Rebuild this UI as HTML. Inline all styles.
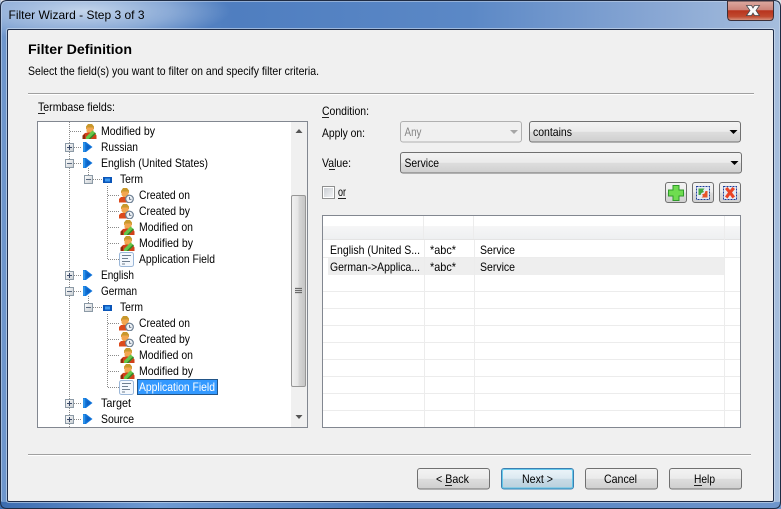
<!DOCTYPE html>
<html><head><meta charset="utf-8"><title>Filter Wizard - Step 3 of 3</title>
<style>
html,body{margin:0;padding:0;background:#f0f0f0;width:781px;height:509px;overflow:hidden}
svg{display:block}
text{font-family:"Liberation Sans",sans-serif;font-size:12px;fill:#000;}
.d{stroke:#8a8a8a;stroke-width:1;stroke-dasharray:1 1;fill:none;shape-rendering:crispEdges}
.u{stroke:#222;stroke-width:1;shape-rendering:crispEdges}
.g{stroke:#ececec;stroke-width:1;shape-rendering:crispEdges}
</style></head><body>
<svg width="781" height="509" viewBox="0 0 781 509" xmlns="http://www.w3.org/2000/svg">
<defs>
<linearGradient id="fr" x1="0" x2="1" y1="0" y2="0"><stop offset="0" stop-color="#6f96cc"/><stop offset=".3" stop-color="#4f7ec0"/><stop offset=".6" stop-color="#5b88c6"/><stop offset=".85" stop-color="#8aa8d4"/><stop offset="1" stop-color="#a6bedd"/></linearGradient>
<linearGradient id="frb" x1="0" x2="1" y1="0" y2="0"><stop offset="0" stop-color="#3c6cb0"/><stop offset=".2" stop-color="#6f9ad2"/><stop offset=".5" stop-color="#4d7cbe"/><stop offset="1" stop-color="#6f96cc"/></linearGradient>
<radialGradient id="glow" cx=".5" cy=".5" r=".5"><stop offset="0" stop-color="#e4edf7" stop-opacity=".75"/><stop offset=".6" stop-color="#d4e1f2" stop-opacity=".4"/><stop offset="1" stop-color="#d4e1f2" stop-opacity="0"/></radialGradient>
<linearGradient id="cl" x1="0" x2="0" y1="0" y2="1"><stop offset="0" stop-color="#dcaaa2"/><stop offset=".45" stop-color="#cc857a"/><stop offset=".5" stop-color="#b8341e"/><stop offset=".8" stop-color="#c04a30"/><stop offset="1" stop-color="#d89a88"/></linearGradient>
<linearGradient id="b" x1="0" x2="0" y1="0" y2="1"><stop offset="0" stop-color="#f3f3f3"/><stop offset=".48" stop-color="#ebebeb"/><stop offset=".52" stop-color="#dddddd"/><stop offset="1" stop-color="#cfcfcf"/></linearGradient>
<linearGradient id="nx" x1="0" x2="0" y1="0" y2="1"><stop offset="0" stop-color="#ecf5fa"/><stop offset=".48" stop-color="#dce9f1"/><stop offset=".52" stop-color="#c8dbe6"/><stop offset="1" stop-color="#b9cfdc"/></linearGradient>
<linearGradient id="th" x1="0" x2="1" y1="0" y2="0"><stop offset="0" stop-color="#f1f1f1"/><stop offset=".45" stop-color="#e6e6e6"/><stop offset=".55" stop-color="#d6d6d6"/><stop offset="1" stop-color="#c4c4c4"/></linearGradient>
<linearGradient id="hd" x1="0" x2="0" y1="0" y2="1"><stop offset="0" stop-color="#f6f6f7"/><stop offset="1" stop-color="#eef0f1"/></linearGradient>
<linearGradient id="ex" x1="0" x2="1" y1="0" y2="1"><stop offset="0" stop-color="#fff"/><stop offset="1" stop-color="#c8cdd2"/></linearGradient>
<linearGradient id="cb" x1="0" x2="1" y1="0" y2="1"><stop offset="0" stop-color="#cbcfd4"/><stop offset="1" stop-color="#f2f3f5"/></linearGradient>

<symbol id="plus" viewBox="0 0 9 9" width="9" height="9"><rect x=".5" y=".5" width="8" height="8" fill="url(#ex)" stroke="#8c9aa6"/><path d="M2 4.5H7M4.5 2V7" stroke="#3a4a68" stroke-width="1" shape-rendering="crispEdges"/></symbol>
<symbol id="minus" viewBox="0 0 9 9" width="9" height="9"><rect x=".5" y=".5" width="8" height="8" fill="url(#ex)" stroke="#8c9aa6"/><path d="M2 4.500H7" stroke="#5a6a80" stroke-width="1" shape-rendering="crispEdges"/></symbol>
<symbol id="arrow" viewBox="0 0 10 10" width="10" height="10"><path d="M0 0H3L9.500 5L3 10H0Z" fill="#1176dc"/><path d="M1 .5V9.500" stroke="#4fb0f2" stroke-width="1"/><path d="M3.500 2L8 5L3.500 8Z" fill="#0d62c4"/></symbol>
<symbol id="pm" viewBox="0 0 15 15" width="15" height="15">
<path d="M4 2.500L6 0H10L12 2.500V5H4Z" fill="#c8982c"/>
<path d="M4.500 3.500H11.500V7.500L10 9H6L4.500 7.500Z" fill="#f2a650"/>
<path d="M.5 15V11.500L3 9L6 8.500H10L13 9L14.500 11.500V15Z" fill="#d2401a"/>
<path d="M.5 15V12L3 10V15Z" fill="#8c2a0c"/>
<path d="M4 13L10.500 6.500L13 8.500L6.500 15H4Z" fill="#64c84a"/>
<path d="M6.500 15L13 8.500L14 9.500L8.500 15Z" fill="#2e8c28"/>
</symbol>
<symbol id="pc" viewBox="0 0 15 15" width="15" height="15">
<path d="M2 3L4 0H8L10 2.500V5H2Z" fill="#c8982c"/>
<path d="M2.500 3.500H9.500V7L8 9H4L2.500 7Z" fill="#f2a650"/>
<path d="M0 14.500V11L2 9H9L10 11V14.500Z" fill="#dc4a1c"/>
<circle cx="10.500" cy="11" r="3.800" fill="#eef2f6" stroke="#6d7f92" stroke-width="1.200"/>
<path d="M10.500 9V11.300L12.400 11.300" stroke="#5c6c80" stroke-width=".9" fill="none"/>
</symbol>
<symbol id="af" viewBox="0 0 15 15" width="15" height="15">
<rect x=".5" y=".5" width="14" height="14" rx="2" fill="#f4f8fd" stroke="#9bb7d8"/>
<path d="M3 3.500H12M3 6.500H9M3 9.500H11M3 12H6" stroke="#6f7f90" stroke-width="1" shape-rendering="crispEdges"/>
</symbol>
<symbol id="term" viewBox="0 0 9 6" width="9" height="6"><rect x="0" y="0" width="9" height="6" fill="#0a55b8"/><rect x="2" y="1.500" width="5" height="3" fill="#3f9af0"/></symbol>
</defs>

<!-- window frame -->
<rect x="0" y="0" width="781" height="509" fill="url(#fr)"/>
<rect x="0" y="502" width="781" height="7" fill="url(#frb)"/>
<rect x="-60" y="-20" width="290" height="62" fill="url(#glow)"/>
<path d="M0 0H6Q1 1 .5 7V0ZM781 0H774Q780 1 781 7V0Z" fill="#dfe3e8"/>
<path d="M.5 502V7Q.5 .5 7 .5H774Q780.500 .5 780.500 7V502Q780.500 508.500 774 508.500H7Q.5 508.500 .5 502Z" fill="none" stroke="#1f2c44"/>
<path d="M1.500 501V8Q1.500 1.500 8 1.500H773Q779.500 1.500 779.500 8V501" fill="none" stroke="#cfdcec" stroke-opacity=".5"/>
<rect x="7.500" y="29.500" width="766" height="472" rx="1.500" fill="#f0f0f0" stroke="#1e2c48"/>
<rect x="6.500" y="28.500" width="768" height="474" rx="2" fill="none" stroke="#dbe6f3" stroke-opacity=".55"/>
<text x="8.500" y="19" textLength="136" lengthAdjust="spacingAndGlyphs">Filter Wizard - Step 3 of 3</text>

<!-- close -->
<path d="M727.500 1V16Q727.500 20.500 731 20.500H770Q773.500 20.500 773.500 16V1Z" fill="url(#cl)" stroke="#3c3038"/>
<path d="M746.500 5.500H751.500L753 8L754.500 5.500H759.500L756 10.500L759.500 15.500H754.500L753 13L751.500 15.500H746.500L750 10.500Z" fill="#fafafa" stroke="#47484e" stroke-width=".8"/>

<!-- heading -->
<text x="28" y="54" textLength="104" lengthAdjust="spacingAndGlyphs" style="font-size:14px;font-weight:bold">Filter Definition</text>
<text x="28" y="75" textLength="291" lengthAdjust="spacingAndGlyphs">Select the field(s) you want to filter on and specify filter criteria.</text>
<rect x="28" y="93" width="726" height="1" fill="#a0a0a0"/><rect x="28" y="94" width="726" height="1" fill="#fff"/>

<text x="38" y="111" textLength="77" lengthAdjust="spacingAndGlyphs">Termbase fields:</text>
<line class="u" x1="38" x2="45" y1="113.500" y2="113.500"/>

<!-- tree -->
<rect x="37.500" y="121.500" width="270" height="306" fill="#fff" stroke="#828790"/>
<path class="d" d="M69.500 122V143M69.500 152V159M69.500 168V271M69.500 280V287M69.500 296V399M69.500 408V415M69.500 424V427"/>
<path class="d" d="M70 131.500H82M74 147.500H82M74 163.500H82M74 275.500H82M74 291.500H82M74 403.500H82M74 419.500H82"/>
<path class="d" d="M88.500 168V175M88.500 296V303"/>
<path class="d" d="M93 179.500H102M93 307.500H102"/>
<path class="d" d="M107.500 186V259.500M107.500 314V387.500"/>
<path class="d" d="M108 195.500H119M108 211.500H119M108 227.500H119M108 243.500H119M108 259.500H119M108 323.500H119M108 339.500H119M108 355.500H119M108 371.500H119M108 387.500H119"/>

<use href="#pm" x="82" y="124"/>
<use href="#plus" x="65" y="143"/><use href="#arrow" x="83" y="142"/>
<use href="#minus" x="65" y="159"/><use href="#arrow" x="83" y="158"/>
<use href="#minus" x="84" y="175"/><use href="#term" x="103" y="177"/>
<use href="#pc" x="119" y="188"/><use href="#pc" x="119" y="204"/><use href="#pm" x="120" y="220"/><use href="#pm" x="120" y="236"/><use href="#af" x="119" y="252"/>
<use href="#plus" x="65" y="271"/><use href="#arrow" x="83" y="270"/>
<use href="#minus" x="65" y="287"/><use href="#arrow" x="83" y="286"/>
<use href="#minus" x="84" y="303"/><use href="#term" x="103" y="305"/>
<use href="#pc" x="119" y="316"/><use href="#pc" x="119" y="332"/><use href="#pm" x="120" y="348"/><use href="#pm" x="120" y="364"/><use href="#af" x="119" y="380"/>
<use href="#plus" x="65" y="399"/><use href="#arrow" x="83" y="398"/>
<use href="#plus" x="65" y="415"/><use href="#arrow" x="83" y="414"/>

<text x="101" y="135" textLength="54" lengthAdjust="spacingAndGlyphs">Modified by</text>
<text x="101" y="151" textLength="37" lengthAdjust="spacingAndGlyphs">Russian</text>
<text x="101" y="167" textLength="107" lengthAdjust="spacingAndGlyphs">English (United States)</text>
<text x="120" y="183" textLength="23" lengthAdjust="spacingAndGlyphs">Term</text>
<text x="139" y="199" textLength="51" lengthAdjust="spacingAndGlyphs">Created on</text>
<text x="139" y="215" textLength="51" lengthAdjust="spacingAndGlyphs">Created by</text>
<text x="139" y="231" textLength="54" lengthAdjust="spacingAndGlyphs">Modified on</text>
<text x="139" y="247" textLength="54" lengthAdjust="spacingAndGlyphs">Modified by</text>
<text x="139" y="263" textLength="76" lengthAdjust="spacingAndGlyphs">Application Field</text>
<text x="101" y="279" textLength="33" lengthAdjust="spacingAndGlyphs">English</text>
<text x="101" y="295" textLength="36" lengthAdjust="spacingAndGlyphs">German</text>
<text x="120" y="311" textLength="23" lengthAdjust="spacingAndGlyphs">Term</text>
<text x="139" y="327" textLength="51" lengthAdjust="spacingAndGlyphs">Created on</text>
<text x="139" y="343" textLength="51" lengthAdjust="spacingAndGlyphs">Created by</text>
<text x="139" y="359" textLength="54" lengthAdjust="spacingAndGlyphs">Modified on</text>
<text x="139" y="375" textLength="54" lengthAdjust="spacingAndGlyphs">Modified by</text>
<rect x="137" y="379" width="81" height="16" fill="#3399ff"/>
<rect x="137.500" y="379.500" width="80" height="15" fill="none" stroke="#111" stroke-dasharray="1 1"/>
<text x="139" y="391" textLength="76" lengthAdjust="spacingAndGlyphs" style="fill:#fff">Application Field</text>
<text x="101" y="407" textLength="30" lengthAdjust="spacingAndGlyphs">Target</text>
<text x="101" y="423" textLength="33" lengthAdjust="spacingAndGlyphs">Source</text>

<!-- scrollbar -->
<rect x="291" y="122" width="16" height="305" fill="#f0f0f0"/>
<rect x="291.500" y="195.500" width="14" height="191" rx="1.500" fill="url(#th)" stroke="#979797"/>
<path d="M295 288.500H302M295 290.500H302M295 292.500H302" stroke="#5a5a5a" shape-rendering="crispEdges"/>
<rect x="295" y="287" width="7" height="7" fill="#9a9a9a" opacity=".25"/>
<path d="M299 129L302.500 133H295.500Z" fill="#555"/>
<path d="M295.500 415H302.500L299 419Z" fill="#555"/>

<!-- right controls -->
<text x="322" y="115" textLength="47" lengthAdjust="spacingAndGlyphs">Condition:</text>
<line class="u" x1="322" x2="329" y1="117.500" y2="117.500"/>
<text x="322" y="137" textLength="43" lengthAdjust="spacingAndGlyphs">Apply on:</text>
<text x="322" y="167" textLength="29" lengthAdjust="spacingAndGlyphs">Value:</text>
<line class="u" x1="329" x2="335" y1="169.500" y2="169.500"/>

<rect x="400.500" y="121.500" width="121" height="20.500" rx="2.500" fill="#f0f0f0" stroke="#b0b0b0"/>
<text x="404.500" y="136" textLength="17" lengthAdjust="spacingAndGlyphs" style="fill:#858585">Any</text>
<path d="M510 130H518L514 134Z" fill="#a6a6a6"/>

<rect x="529.500" y="121.500" width="211" height="20.500" rx="2.500" fill="url(#b)" stroke="#707070"/>
<text x="533" y="136" textLength="39" lengthAdjust="spacingAndGlyphs">contains</text>
<path d="M729.500 130H737.500L733.500 134Z" fill="#000"/>

<rect x="400.500" y="152.500" width="341" height="20.500" rx="2.500" fill="url(#b)" stroke="#707070"/>
<text x="404.500" y="167" textLength="34.500" lengthAdjust="spacingAndGlyphs">Service</text>
<path d="M730.500 161H738.500L734.500 165Z" fill="#000"/>

<rect x="322.500" y="186.500" width="12" height="12" fill="#fff" stroke="#8e8f8f"/>
<rect x="324" y="188" width="9" height="9" fill="url(#cb)"/>
<text x="338" y="196" textLength="8" lengthAdjust="spacingAndGlyphs">or</text>
<line class="u" x1="338" x2="346" y1="198.500" y2="198.500"/>

<!-- tool buttons -->
<rect x="665.500" y="182.500" width="21" height="20" rx="2.500" fill="url(#b)" stroke="#707070"/>
<path d="M673 185.500H679V190H683.500V196H679V200.500H673V196H668.500V190H673Z" fill="#6fdc50" stroke="#2f9a2a"/>
<rect x="692.500" y="182.500" width="21" height="20" rx="2.500" fill="url(#b)" stroke="#707070"/>
<rect x="696.500" y="186.500" width="13" height="13" fill="#e6ebf4" stroke="#1f3f9a" stroke-dasharray="2 1"/>
<path d="M698.500 195V188.500H704.500L703 190.500L704 192L701.500 193L700.500 195Z" fill="#46a844"/>
<path d="M707.500 191V197.500H701.500L703 196L702 194.500L704.500 193.500L705.500 191Z" fill="#e8542a"/>
<rect x="719.500" y="182.500" width="21" height="20" rx="2.500" fill="url(#b)" stroke="#707070"/>
<rect x="723.500" y="186.500" width="13" height="13" fill="#e6ebf4" stroke="#1f3f9a" stroke-dasharray="2 1"/>
<path d="M725 189L727.500 187L730 190L732.500 187L735 189L732 192.500L735 196.500L732.500 198.500L730 195L727.500 198.500L725 196.500L728 192.500Z" fill="#ea4426"/>

<!-- grid -->
<rect x="322.500" y="215.500" width="418" height="212" fill="#fff" stroke="#828790"/>
<rect x="323" y="226" width="417" height="13" fill="url(#hd)"/>
<rect x="323" y="239" width="417" height="1" fill="#e4e4e4"/>
<rect x="328" y="258" width="396" height="17" fill="#eeeeee"/>
<path class="g" d="M323 257.500H740M323 291.500H740M323 308.500H740M323 325.500H740M323 342.500H740M323 359.500H740M323 376.500H740M323 393.500H740M323 410.500H740"/>
<path class="g" d="M424.500 240V427M474.500 240V427M724.500 216V427M423.500 216V239M473.500 216V239"/>
<text x="330" y="254" textLength="90" lengthAdjust="spacingAndGlyphs">English (United S...</text>
<text x="430" y="254" textLength="26" lengthAdjust="spacingAndGlyphs">*abc*</text>
<text x="480" y="254" textLength="35" lengthAdjust="spacingAndGlyphs">Service</text>
<text x="330" y="271" textLength="90" lengthAdjust="spacingAndGlyphs">German-&gt;Applica...</text>
<text x="430" y="271" textLength="26" lengthAdjust="spacingAndGlyphs">*abc*</text>
<text x="480" y="271" textLength="35" lengthAdjust="spacingAndGlyphs">Service</text>

<!-- bottom -->
<rect x="28" y="454" width="723" height="1" fill="#a0a0a0"/><rect x="28" y="455" width="723" height="1" fill="#fff"/>
<rect x="417.500" y="468.500" width="72" height="20.500" rx="2.500" fill="url(#b)" stroke="#707070"/>
<text x="436" y="483" textLength="33" lengthAdjust="spacingAndGlyphs">&lt; Back</text>
<line class="u" x1="445" x2="452" y1="485.500" y2="485.500"/>
<rect x="501.500" y="468.500" width="72" height="20.500" rx="2.500" fill="url(#nx)" stroke="#3c7fb1"/>
<rect x="502.500" y="469.500" width="70" height="18.500" rx="1.500" fill="none" stroke="#48c0e8" stroke-opacity=".8"/>
<text x="522" y="483" textLength="31" lengthAdjust="spacingAndGlyphs">Next &gt;</text>
<rect x="585.500" y="468.500" width="72" height="20.500" rx="2.500" fill="url(#b)" stroke="#707070"/>
<text x="604" y="483" textLength="33" lengthAdjust="spacingAndGlyphs">Cancel</text>
<rect x="669.500" y="468.500" width="72" height="20.500" rx="2.500" fill="url(#b)" stroke="#707070"/>
<text x="694" y="483" textLength="21" lengthAdjust="spacingAndGlyphs">Help</text>
<line class="u" x1="694" x2="702" y1="485.500" y2="485.500"/>
</svg>
</body></html>
